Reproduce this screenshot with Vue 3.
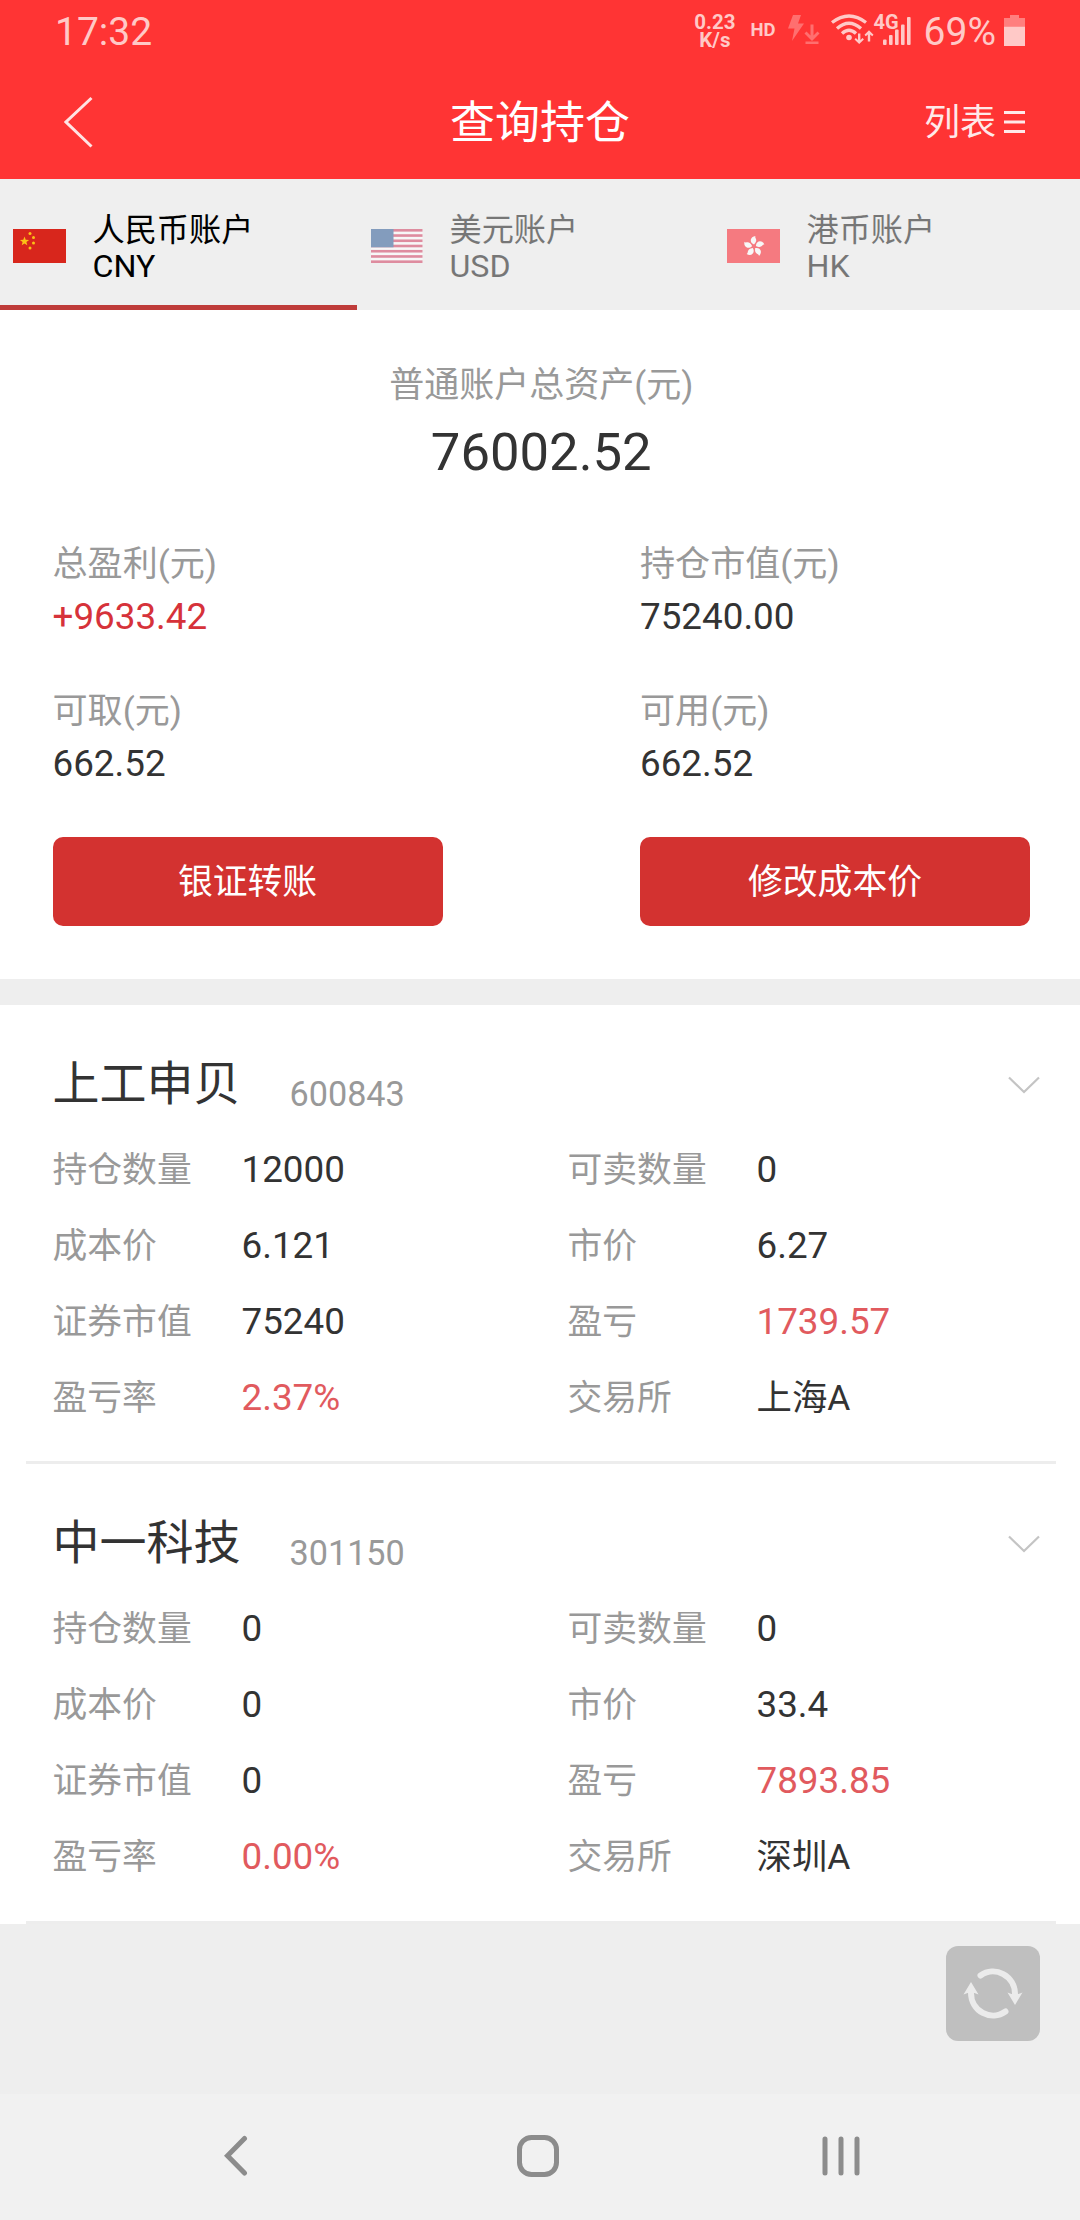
<script setup>
const tabs = [
  { name: '人民币账户', code: 'CNY', flag: 'cn', active: true },
  { name: '美元账户', code: 'USD', flag: 'us', active: false },
  { name: '港币账户', code: 'HK', flag: 'hk', active: false },
]

const speed = '0.23\nK/s'

const metrics = [
  { label: '总盈利(元)', value: '+9633.42', up: true },
  { label: '持仓市值(元)', value: '75240.00' },
  { label: '可取(元)', value: '662.52' },
  { label: '可用(元)', value: '662.52' },
]

const stocks = [
  {
    name: '上工申贝',
    code: '600843',
    fields: [
      { label: '持仓数量', value: '12000' },
      { label: '可卖数量', value: '0' },
      { label: '成本价', value: '6.121' },
      { label: '市价', value: '6.27' },
      { label: '证券市值', value: '75240' },
      { label: '盈亏', value: '1739.57', up: true },
      { label: '盈亏率', value: '2.37%', up: true },
      { label: '交易所', value: '上海A', market: true },
    ],
  },
  {
    name: '中一科技',
    code: '301150',
    fields: [
      { label: '持仓数量', value: '0' },
      { label: '可卖数量', value: '0' },
      { label: '成本价', value: '0' },
      { label: '市价', value: '33.4' },
      { label: '证券市值', value: '0' },
      { label: '盈亏', value: '7893.85', up: true },
      { label: '盈亏率', value: '0.00%', up: true },
      { label: '交易所', value: '深圳A', market: true },
    ],
  },
]

const stripes = [0, 1, 2, 3, 4, 5, 6]
const petals = [0, 72, 144, 216, 288]
</script>

<template>
  <div class="app">
    <header class="top">
      <div class="status">
        <span class="time">17:32</span>
        <div class="indicators">
          <div class="speed">{{ speed }}</div>
          <span class="hd">HD</span>
          <svg class="saver" width="34" height="34" viewBox="0 0 34 34">
            <path d="M6 1H14L11 9.500H17L5 27L7.500 14.500H1Z" />
            <path d="M23.500 10.500h3v11l4-4 2 2-7.500 7.500-7.500-7.500 2-2 4 4zM18.500 27.500h13v2.500h-13z" />
          </svg>
          <svg class="wifi" width="42" height="34" viewBox="0 0 42 34">
            <g fill="none" stroke="currentColor" stroke-width="3.300">
              <path d="M1 9.500Q18 -3.500 35 9.500" />
              <path d="M6 15.500Q18 5 30 15.500" />
              <path d="M11 20.500Q18 14 25 20.500" />
            </g>
            <circle cx="18" cy="24.500" r="2.800" />
            <path d="M27 20.500h2.400v6.500l2.200-2 1.300 1.500-4.700 4.500-4.700-4.500 1.300-1.500 2.200 2z" />
            <path d="M36.800 28.500h2.400v-7l2 1.800 1.300-1.500-4.500-4.500-4.500 4.500 1.300 1.500 2-1.800z" />
          </svg>
          <div class="cell">
            <span class="net">4G</span>
            <svg width="30" height="34" viewBox="0 0 30 34">
              <rect x="1" y="26.500" width="3.600" height="5.500" rx="1" />
              <rect x="7" y="22" width="3.600" height="10" rx="1" />
              <rect x="13" y="16.500" width="3.600" height="15.500" rx="1" />
              <rect x="19" y="11.500" width="3.600" height="20.500" rx="1" />
              <rect x="25" y="4" width="3.600" height="28" rx="1" />
            </svg>
          </div>
          <span class="percent">69%</span>
          <svg class="battery" width="21" height="34" viewBox="0 0 21 34">
            <path class="dim" d="M6 2h9v3h6v8.500H0V5h6z" />
            <path d="M0 13.500h21V33H0z" />
          </svg>
        </div>
      </div>
      <nav class="bar">
        <svg class="back" width="30" height="52" viewBox="0 0 30 52">
          <path d="M27.500 2L2 26L27.500 50.500" />
        </svg>
        <h1>查询持仓</h1>
        <div class="list-link">
          <span>列表</span>
          <svg width="21" height="24" viewBox="0 0 21 24">
            <path d="M0 2.500h21M0 12h21M0 21.500h21" stroke="#ffe9e9" stroke-width="3" />
          </svg>
        </div>
      </nav>
    </header>

    <div class="tabs">
      <div v-for="t in tabs" :key="t.code" class="tab" :class="{ active: t.active }">
        <svg v-if="t.flag === 'cn'" class="flag" viewBox="0 0 53 34">
          <rect width="53" height="34" fill="#d8261c" />
          <g fill="#fbc216">
            <path d="M11.500 7.500l1.200 3.200 3.400.2-2.700 2.100.9 3.300-2.800-1.900-2.800 1.900.9-3.300-2.700-2.100 3.400-.2z" />
            <circle cx="17" cy="4.500" r="1.500" />
            <circle cx="20.500" cy="8.500" r="1.500" />
            <circle cx="20.500" cy="14" r="1.500" />
            <circle cx="17" cy="19" r="1.500" />
          </g>
        </svg>
        <svg v-else-if="t.flag === 'us'" class="flag" viewBox="0 0 53 34">
          <rect x="1" width="51.500" height="34" fill="#fff" />
          <rect v-for="s in stripes" :key="s" x="1" :y="s * 5.23" width="51.500" height="2.620" fill="#cf2b52" />
          <rect x="1" width="22.500" height="18.300" fill="#194b8c" />
        </svg>
        <svg v-else class="flag" viewBox="0 0 53 34">
          <rect width="53" height="34" fill="#fb0713" />
          <g transform="translate(27 17.500)" fill="#fff">
            <path
              v-for="p in petals"
              :key="p"
              :transform="`rotate(${p})`"
              d="M0 -2C-5 -4 -4 -10 1.500 -10.500C0 -8.500 5 -7 0 -2Z"
            />
          </g>
        </svg>
        <div class="tab-text">
          <span>{{ t.name }}</span>
          <span>{{ t.code }}</span>
        </div>
      </div>
    </div>

    <section class="summary">
      <div class="total-label">普通账户总资产(元)</div>
      <div class="total">76002.52</div>
      <div class="metrics">
        <div v-for="m in metrics" :key="m.label" class="metric">
          <span class="m-label">{{ m.label }}</span>
          <span class="m-value" :class="{ profit: m.up }">{{ m.value }}</span>
        </div>
      </div>
      <div class="actions">
        <button>银证转账</button>
        <button>修改成本价</button>
      </div>
    </section>

    <section class="holdings">
      <article v-for="s in stocks" :key="s.code" class="stock">
        <div class="stock-head">
          <h2>{{ s.name }}</h2>
          <span class="code">{{ s.code }}</span>
          <svg class="chevron" width="32" height="18" viewBox="0 0 32 18">
            <path d="M1 1.500L16 16L31 1.500" />
          </svg>
        </div>
        <div class="fields">
          <div v-for="f in s.fields" :key="f.label" class="field">
            <span class="f-label">{{ f.label }}</span>
            <span class="f-value" :class="{ up: f.up, market: f.market }">{{ f.value }}</span>
          </div>
        </div>
        <div class="rule"></div>
      </article>
    </section>

    <div class="rest">
      <div class="refresh">
        <svg width="94" height="95" viewBox="0 0 94 95">
          <g fill="none" stroke="#ebebeb" stroke-width="6" stroke-linecap="round">
            <path d="M34.500 29.500A22 22.500 0 0 1 69 48" />
            <path d="M59.500 65.500A22 22.500 0 0 1 25 47" />
          </g>
          <path d="M61.500 46.500L65.500 48L72.500 48L76.500 46.500L69 59Z" fill="#ebebeb" />
          <path d="M32.500 48.500L28.500 47L21.500 47L17.500 48.500L25 36Z" fill="#ebebeb" />
        </svg>
      </div>
    </div>

    <footer class="sysnav">
      <svg width="24" height="42" viewBox="0 0 24 42">
        <path d="M20.500 3.500L3.500 20.800L20.500 38" stroke-linecap="round" stroke-linejoin="miter" />
      </svg>
      <svg class="home" width="42" height="42" viewBox="0 0 42 42">
        <rect x="2.500" y="2.500" width="37" height="37" rx="12" />
      </svg>
      <svg width="38" height="42" viewBox="0 0 38 42">
        <path d="M3 4V38M19 4V38M35 4V38" stroke-linecap="round" />
      </svg>
    </footer>
  </div>
</template>

<style>
body {
  margin: 0;
  background: #eee;
}
</style>

<style scoped>
.app {
  width: 1080px;
  height: 2220px;
  display: flex;
  flex-direction: column;
  background: #eee;
  color: #333;
  font-family: Roboto, 'Noto Sans CJK SC', sans-serif;
  font-size: 34.800px;
  overflow: hidden;
}
svg {
  display: block;
  flex: none;
}
h1,
h2 {
  margin: 0;
  font-weight: 400;
}
.top {
  height: 179px;
  background: #ff3434;
  color: #fff;
}
.status {
  height: 64px;
  display: flex;
  justify-content: space-between;
  padding: 0 55px;
  color: #ffc9c7;
}
.status svg {
  fill: currentColor;
}
.time,
.percent {
  font-size: 39px;
  line-height: 65px;
}
.indicators {
  display: flex;
  align-items: flex-start;
}
.speed {
  padding-top: 13px;
  font-size: 20.500px;
  font-weight: 700;
  line-height: 18px;
  text-align: center;
  white-space: pre-line;
}
.hd {
  margin-left: 15px;
  font-size: 18.500px;
  font-weight: 700;
  line-height: 61px;
}
.saver {
  margin: 14px 0 0 11px;
  opacity: 0.4;
}
.wifi {
  margin: 13px 0 0 10px;
  overflow: visible;
}
.cell {
  position: relative;
  margin: 13px 0 0 9px;
}
.net {
  position: absolute;
  left: -8px;
  top: -1px;
  font-size: 20px;
  font-weight: 700;
  line-height: 20px;
}
.percent {
  margin-left: 12px;
}
.battery {
  margin: 13px 0 0 8px;
}
.dim {
  opacity: 0.5;
}
.bar {
  height: 115px;
  display: grid;
  grid-template-columns: 1fr auto 1fr;
  align-items: center;
  padding: 0 55px 0 64px;
}
.back {
  fill: none;
  stroke: #ffe3e3;
  stroke-width: 3;
}
h1 {
  font-size: 45px;
  line-height: 60px;
  padding-top: 4px;
  margin-right: 9px;
}
.list-link {
  display: flex;
  align-items: center;
  justify-content: flex-end;
  gap: 8px;
  color: #ffe9e9;
  font-size: 36px;
  line-height: 50px;
}
.list-link span {
  padding-top: 2px;
}
.tabs {
  height: 131px;
  display: flex;
  background: #efefef;
}
.tab {
  width: 357px;
  box-sizing: border-box;
  display: flex;
  padding: 0 0 0 13px;
  color: #000;
  border-bottom: 5px solid transparent;
}
.tab:not(.active) .flag,
.tab:not(.active) .tab-text {
  opacity: 0.5;
}
.tab.active {
  border-bottom-color: #bf3c3a;
}
.flag {
  width: 53px;
  height: 34px;
  margin-top: 50px;
}
.tab-text {
  display: flex;
  flex-direction: column;
  margin: 33px 0 0 26.500px;
  font-size: 32.200px;
  line-height: 36px;
}
.summary {
  height: 669px;
  box-sizing: border-box;
  background: #fff;
  padding: 50px 50px 0 52.500px;
}
.total-label {
  text-align: center;
  font-size: 35px;
  line-height: 52px;
  color: #999;
}
.total {
  margin-top: 5px;
  text-align: center;
  font-size: 52.600px;
  line-height: 70px;
}
.metrics {
  display: grid;
  grid-template-columns: 587.500px 1fr;
  row-gap: 43px;
  margin-top: 51.500px;
}
.metric {
  display: flex;
  flex-direction: column;
}
.m-label {
  font-size: 35.100px;
  line-height: 51px;
  color: #999;
}
.m-value {
  font-size: 36.800px;
  line-height: 53px;
}
.profit {
  color: #d6323a;
}
.actions {
  display: flex;
  justify-content: space-between;
  margin-top: 47.500px;
}
button {
  width: 390px;
  height: 89px;
  box-sizing: border-box;
  border: 0;
  border-radius: 10px;
  padding: 0 0 5px;
  background: #d33230;
  color: #fff;
  font: inherit;
}
.holdings {
  margin-top: 26px;
  background: #fff;
}
.stock {
  height: 459px;
  box-sizing: border-box;
  display: flex;
  flex-direction: column;
  padding-top: 49px;
}
.stock:last-child {
  height: 460px;
}
.stock-head {
  display: flex;
  align-items: flex-start;
  padding: 0 40px 0 52.500px;
}
h2 {
  font-size: 47px;
  line-height: 60px;
}
.code {
  margin: 16px 0 0 49px;
  font-size: 34.200px;
  line-height: 48px;
  color: #999;
}
.chevron {
  margin: 22px 0 0 auto;
  fill: none;
  stroke: #c4c4c4;
  stroke-width: 2.200;
}
.fields {
  display: grid;
  grid-template-columns: 515px 1fr;
  margin-top: 14px;
  padding-left: 52.500px;
}
.field {
  display: flex;
  align-items: baseline;
  height: 76px;
  line-height: 76px;
}
.f-label {
  width: 189px;
  color: #999;
}
.f-value {
  font-size: 36.800px;
}
.market {
  font-size: 35.400px;
}
.up {
  color: #e15a5e;
}
.rule {
  height: 3px;
  margin: auto 24px 0 26px;
  background: #ededed;
}
.rest {
  flex: 1;
  display: flex;
  justify-content: flex-end;
  align-items: flex-start;
  padding: 22px 40px 0 0;
}
.refresh {
  width: 94px;
  height: 95px;
  border-radius: 12px;
  background: #bfbfbf;
}
.sysnav {
  height: 126px;
  box-sizing: border-box;
  display: flex;
  justify-content: space-between;
  align-items: flex-start;
  padding: 41px 220px 0 224px;
  background: #f1f1f1;
}
.sysnav svg {
  fill: none;
  stroke: #8c8c8c;
  stroke-width: 5;
}
.sysnav .home {
  margin-left: 6px;
}
</style>
